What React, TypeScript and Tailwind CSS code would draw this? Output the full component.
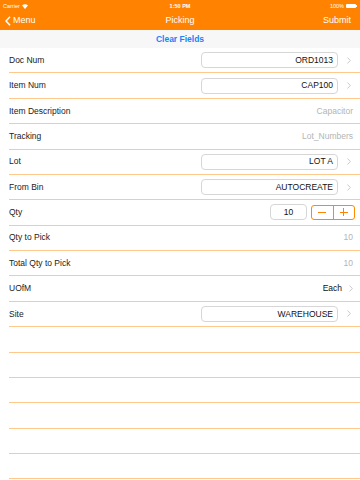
import React from "react";

const Chevron = () => (
  <svg width="4" height="7" viewBox="0 0 4 7" className="block">
    <path d="M0.5 0.5 L3.3 3.5 L0.5 6.5" fill="none" stroke="#c4c4c8" strokeWidth="0.9" />
  </svg>
);

type Row =
  | { label: string; kind: "field"; value: string }
  | { label: string; kind: "ro"; value: string }
  | { label: string; kind: "qty"; value: string }
  | { label: string; kind: "select"; value: string }
  | { label: string; kind: "empty" };

const rows: Row[] = [
  { label: "Doc Num", kind: "field", value: "ORD1013" },
  { label: "Item Num", kind: "field", value: "CAP100" },
  { label: "Item Description", kind: "ro", value: "Capacitor" },
  { label: "Tracking", kind: "ro", value: "Lot_Numbers" },
  { label: "Lot", kind: "field", value: "LOT A" },
  { label: "From Bin", kind: "field", value: "AUTOCREATE" },
  { label: "Qty", kind: "qty", value: "10" },
  { label: "Qty to Pick", kind: "ro", value: "10" },
  { label: "Total Qty to Pick", kind: "ro", value: "10" },
  { label: "UOfM", kind: "select", value: "Each" },
  { label: "Site", kind: "field", value: "WAREHOUSE" },
];

export default function App() {
  const empties = 6;
  return (
    <div
      className="w-[360px] h-[480px] overflow-hidden bg-white"
      style={{ fontFamily: '"Liberation Sans", Arial, sans-serif' }}
    >
      {/* status + nav */}
      <div className="bg-[#ff8300] text-white">
        <div className="h-[12px] flex items-center justify-between px-[3px] text-[5.5px] relative">
          <div className="flex items-center gap-[2px]">
            <span>Carrier</span>
            <svg width="6" height="5" viewBox="0 0 6 5">
              <path d="M0 1.6 A4.2 4.2 0 0 1 6 1.6 L3 5 Z" fill="#fff" />
            </svg>
          </div>
          <span className="absolute left-1/2 -translate-x-1/2 font-bold">1:50 PM</span>
          <div className="flex items-center gap-[2px]">
            <span>100%</span>
            <div className="flex items-center">
              <div className="w-[10px] h-[4.5px] bg-white rounded-[1px]" />
              <div className="w-[1px] h-[2px] bg-white" />
            </div>
          </div>
        </div>
        <div className="h-[18px] flex items-center justify-between relative pl-[5px] pr-[9px] text-[9px]">
          <div className="flex items-center gap-[2px]">
            <svg width="6" height="10" viewBox="0 0 6 10">
              <path d="M5 0.8 L1 5 L5 9.2" fill="none" stroke="#fff" strokeWidth="1.6" />
            </svg>
            <span>Menu</span>
          </div>
          <span className="absolute left-1/2 -translate-x-1/2 font-medium">Picking</span>
          <span>Submit</span>
        </div>
      </div>
      {/* clear fields bar */}
      <div className="h-[18px] bg-[#f7f7f7] flex items-center justify-center">
        <span className="text-[8.5px] font-bold text-[#1a82fb]">Clear Fields</span>
      </div>
      {/* rows */}
      <div className="flex flex-col">
        {rows.map((r, i) => (
          <div
            key={i}
            className="ml-[9px] h-[25.375px] shrink-0 border-b border-[#ffc98e] flex items-center text-[8.5px] text-[#222]"
          >
            <span className="flex-1">{r.label}</span>
            {r.kind === "field" && (
              <>
                <div className="w-[137px] h-[16px] border border-[#d6d6d6] rounded-[4px] flex items-center justify-end pr-[4px] text-[#111]">
                  {r.value}
                </div>
                <div className="w-[22px] flex justify-center">
                  <Chevron />
                </div>
              </>
            )}
            {r.kind === "ro" && (
              <span className="pr-[7px] text-[#b4b4b4]">{r.value}</span>
            )}
            {r.kind === "select" && (
              <>
                <span className="text-[#111]">{r.value}</span>
                <div className="w-[18px] flex justify-center">
                  <Chevron />
                </div>
              </>
            )}
            {r.kind === "qty" && (
              <div className="flex items-center pr-[5px]">
                <div className="w-[37px] h-[16px] border border-[#d6d6d6] rounded-[4px] flex items-center justify-center text-[#111]">
                  {r.value}
                </div>
                <div className="ml-[4px] w-[44px] h-[15px] border border-[#ff8a00] rounded-[3px] flex text-[#ff8300]">
                  <div className="flex-1 flex items-center justify-center border-r border-[#ff8a00]">
                    <div className="w-[8px] h-[1.2px] bg-[#ff8300]" />
                  </div>
                  <div className="flex-1 flex items-center justify-center relative">
                    <div className="w-[8px] h-[1.2px] bg-[#ff8300]" />
                    <div className="absolute w-[1.2px] h-[8px] bg-[#ff8300]" />
                  </div>
                </div>
              </div>
            )}
          </div>
        ))}
        {Array.from({ length: empties }).map((_, i) => (
          <div key={"e" + i} className="ml-[9px] h-[25.375px] shrink-0 border-b border-[#ffc98e]" />
        ))}
      </div>
    </div>
  );
}
